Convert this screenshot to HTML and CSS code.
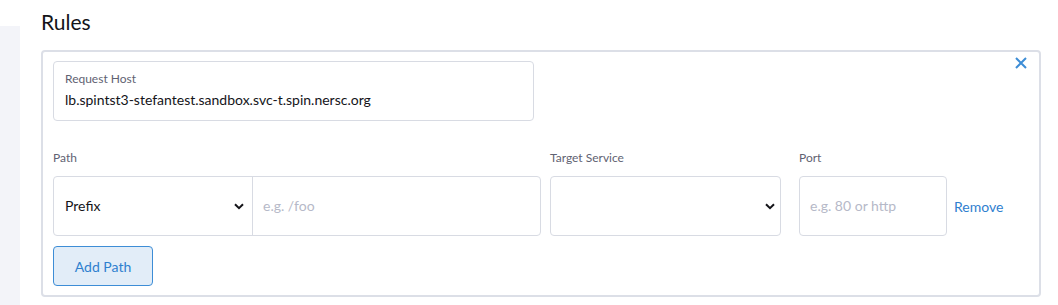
FILE: index.html
```html
<!DOCTYPE html>
<html lang="en">

<head>
    <meta charset="UTF-8">
    <meta name="viewport" content="width=device-width, initial-scale=1.0">
    <title>Ingress Rules</title>
    <link rel="stylesheet" href="styles.css">
</head>

<body>

    <div class="layout">
        <aside class="sidebar"></aside>

        <main class="content">
            <h2 class="section-title">Rules</h2>

            <div class="rule-card">
                <button class="close-btn" type="button" aria-label="Remove rule">
                    <svg width="12" height="12" viewBox="0 0 12 12">
                        <path d="M1 1 L11 11 M11 1 L1 11" stroke="currentColor" stroke-width="2" fill="none" />
                    </svg>
                </button>

                <div class="host-field">
                    <label>Request Host</label>
                    <div class="host-value">lb.spintst3-stefantest.sandbox.svc-t.spin.nersc.org</div>
                </div>

                <div class="path-row">
                    <div class="col col-path">
                        <label>Path</label>
                        <div class="input-group">
                            <div class="select select-type">
                                <span>Prefix</span>
                                <svg class="chevron" width="10" height="7" viewBox="0 0 10 7">
                                    <path d="M1 1.2 L5 5.2 L9 1.2" stroke="currentColor" stroke-width="2" fill="none" />
                                </svg>
                            </div>
                            <div class="text-input">
                                <span class="placeholder">e.g. /foo</span>
                            </div>
                        </div>
                    </div>

                    <div class="col col-target">
                        <label>Target Service</label>
                        <div class="select select-box">
                            <span></span>
                            <svg class="chevron" width="10" height="7" viewBox="0 0 10 7">
                                <path d="M1 1.2 L5 5.2 L9 1.2" stroke="currentColor" stroke-width="2" fill="none" />
                            </svg>
                        </div>
                    </div>

                    <div class="col col-port">
                        <label>Port</label>
                        <div class="text-input boxed">
                            <span class="placeholder">e.g. 80 or http</span>
                        </div>
                    </div>

                    <div class="col col-remove">
                        <a href="#" class="remove-link">Remove</a>
                    </div>
                </div>

                <button class="add-btn" type="button">Add Path</button>
            </div>
        </main>
    </div>

</body>
</html>
```

FILE: styles.css
```css
body {
    font-family: 'Lato', 'Liberation Sans', sans-serif;
    background-color: #ffffff;
    color: #141419;
    margin: 0;
}

.layout {
    display: flex;
    height: 305px;
}

.sidebar {
    width: 20px;
    margin-top: 26px;
    background-color: #f3f4f9;
}

.content {
    width: 1000px;
    padding-left: 21px;
}

.section-title {
    font-size: 21px;
    font-weight: 400;
    line-height: 26px;
    margin: 9px 0 15px;
}

.rule-card {
    position: relative;
    border: 2px solid #dcdfe7;
    border-radius: 4px;
    padding: 9px 10px 9px 10px;
}

.close-btn {
    position: absolute;
    top: 5px;
    right: 12px;
    padding: 0;
    border: none;
    background: none;
    color: #3d8dd6;
    cursor: pointer;
}

label {
    display: block;
    font-size: 12px;
    line-height: 16px;
    color: #5f6272;
}

.host-field {
    width: 457px;
    border: 1px solid #d8dbe3;
    border-radius: 4px;
    padding: 9px 11px 10px;
}

.host-value {
    margin-top: 3px;
    font-size: 14px;
    line-height: 20px;
}

.path-row {
    display: flex;
    margin-top: 29px;
}

.col label {
    margin-bottom: 10px;
}

.col-path {
    width: 488px;
    margin-right: 9px;
}

.col-target {
    width: 231px;
    margin-right: 18px;
}

.col-port {
    width: 148px;
    margin-right: 7px;
}

.col-remove {
    display: flex;
    align-items: center;
    padding-top: 26px;
}

.input-group {
    display: flex;
    height: 58px;
    border: 1px solid #d8dbe3;
    border-radius: 4px;
}

.select {
    display: flex;
    align-items: center;
    justify-content: space-between;
    font-size: 14px;
    line-height: 20px;
    color: #141419;
}

.select-type {
    width: 179px;
    padding: 0 8px 0 11px;
    border-right: 1px solid #d8dbe3;
}

.select-box {
    height: 58px;
    border: 1px solid #d8dbe3;
    border-radius: 4px;
    padding: 0 5px 0 11px;
}

.chevron {
    color: #141419;
}

.text-input {
    display: flex;
    align-items: center;
    flex: 1;
    padding-left: 10px;
    font-size: 14px;
    line-height: 20px;
}

.text-input.boxed {
    height: 58px;
    border: 1px solid #d8dbe3;
    border-radius: 4px;
}

.placeholder {
    color: #b6b9c8;
}

.remove-link {
    font-size: 14px;
    color: #2f80cf;
    text-decoration: none;
}

.add-btn {
    display: block;
    margin-top: 10px;
    width: 100px;
    height: 40px;
    font-family: inherit;
    font-size: 14px;
    color: #2f80cf;
    background-color: #e2edf8;
    border: 1px solid #3d8dd6;
    border-radius: 4px;
    cursor: pointer;
}
```
